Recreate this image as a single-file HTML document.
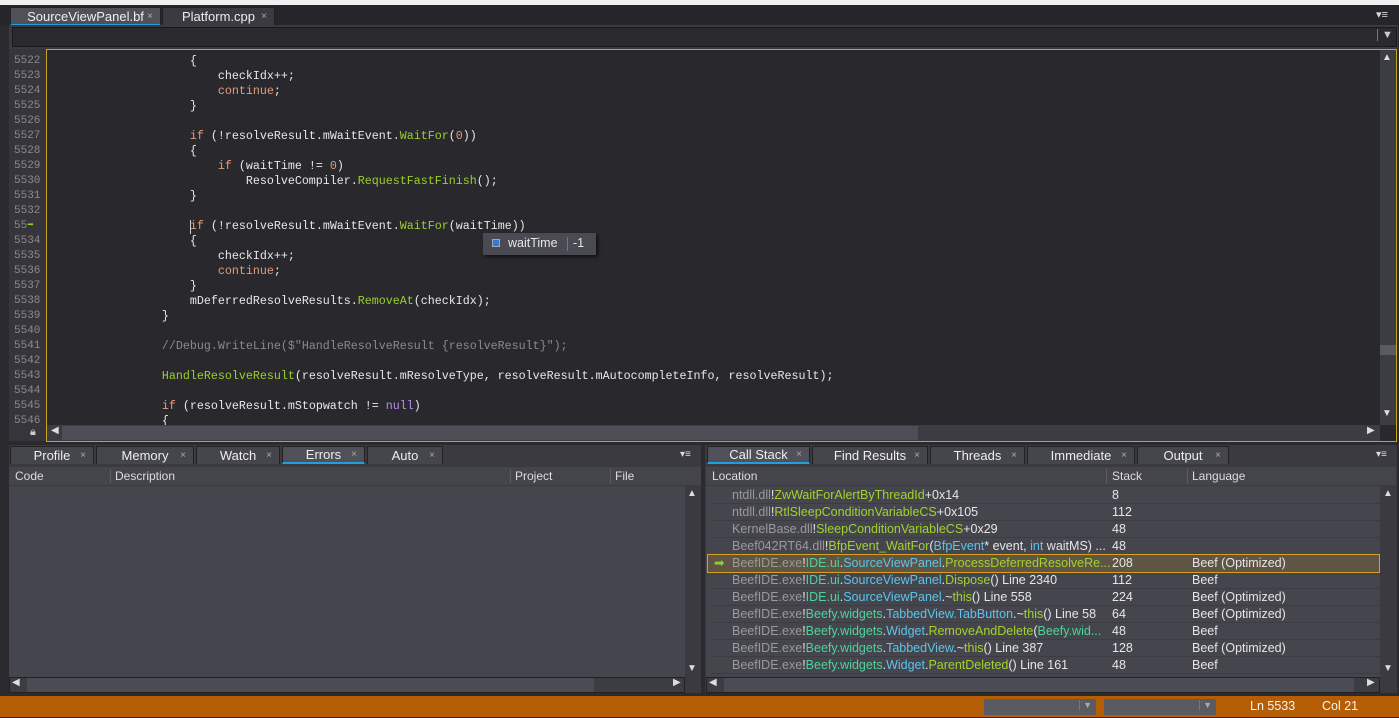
<!DOCTYPE html>
<html><head><meta charset="utf-8">
<style>
*{box-sizing:border-box;margin:0;padding:0}
body{width:1399px;height:718px;background:#2b2b2f;position:relative;overflow:hidden;font-family:"Liberation Sans","DejaVu Sans",sans-serif;color:#e6e6e6;font-size:12.5px}
.a{position:absolute}
.tab{position:absolute;height:19px;background:#45454c;border:1px solid #222;border-bottom:none;color:#eee;font-size:13px;line-height:18px;text-align:center}
.tab .x{position:absolute;right:7px;top:0;color:#aaa;font-size:10px}
.tab.sel{background:#505058;border-bottom:2px solid #1ea0e0}
.code{position:absolute;left:50px;font-family:"Liberation Mono",monospace;font-size:11.67px;white-space:pre;color:#e8e8e8}
.ln{position:absolute;left:14px;font-family:"Liberation Mono",monospace;font-size:11px;color:#8c8c8c}
.k{color:#e59b7b}.m{color:#9ad02c}.n{color:#e59b7b}.c{color:#8a8a8a}.nl{color:#b88ce8}
.row{position:absolute;left:712px;height:17px;line-height:17px;width:668px;font-size:12.5px;white-space:nowrap;border-bottom:1px solid #3c3c42}
.g{color:#9a9a9a}.ns{color:#4fd39c}.ty{color:#5cc4ea}.fn{color:#a2d22e}
.hdr{position:absolute;height:18px;background:#44444b;font-size:12px;line-height:18px;color:#ddd}
.sep{position:absolute;top:2px;width:1px;height:14px;background:#5c5c64}
</style></head><body>
<div class="a" style="left:0;top:0;width:1399px;height:5px;background:#f0f0f0"></div>
<div class="a" style="left:0;top:5px;width:1399px;height:21px;background:#26262a"></div>
<div class="tab sel" style="left:10px;top:7px;width:151px">SourceViewPanel.bf<span class="x">×</span></div>
<div class="tab" style="left:162px;top:7px;width:113px;background:#3a3a40">Platform.cpp<span class="x">×</span></div>
<div class="a" style="left:1376px;top:8px;color:#ddd;font-size:11px">▾≡</div>
<div class="a" style="left:9px;top:25px;width:1389px;height:24px;background:#3a3a40"></div>
<div class="a" style="left:12px;top:27px;width:1385px;height:20px;background:#2a2a2e;border:1px solid #19191c"></div>
<div class="a" style="left:1377px;top:29px;color:#ccc;font-size:11px;border-left:1px solid #777;padding-left:4px">▼</div>
<!-- editor -->
<div class="a" style="left:9px;top:49px;width:38px;height:392px;background:#35353b"></div>
<div class="a" style="left:46px;top:49px;width:1351px;height:393px;background:#29292d;border:1px solid #c8a218"></div>
<div class="a" style="left:1380px;top:50px;width:16px;height:375px;background:#3c3c43"></div>
<div class="a" style="left:1382px;top:52px;color:#ddd;font-size:10px">▲</div>
<div class="a" style="left:1382px;top:408px;color:#ddd;font-size:10px">▼</div>
<div class="a" style="left:1380px;top:345px;width:16px;height:10px;background:#5a5a62"></div>
<div class="a" style="left:47px;top:425px;width:1333px;height:16px;background:#3c3c43"></div>
<div class="a" style="left:62px;top:426px;width:856px;height:14px;background:#4e4e56"></div>
<div class="a" style="left:51px;top:425px;color:#ddd;font-size:10px">◀</div>
<div class="a" style="left:1367px;top:425px;color:#ddd;font-size:10px">▶</div>
<div class="a" style="left:30px;top:426px;color:#ccc;font-size:11px">🔒︎</div>
<div class="ln" style="top:54px;line-height:15px">5522<br>5523<br>5524<br>5525<br>5526<br>5527<br>5528<br>5529<br>5530<br>5531<br>5532<br>55<span style="color:#8fd030">➡</span><br>5534<br>5535<br>5536<br>5537<br>5538<br>5539<br>5540<br>5541<br>5542<br>5543<br>5544<br>5545<br>5546</div>
<div class="code" style="top:54px;line-height:15px;height:371px;overflow:hidden">                    {
                        checkIdx++;
                        <span class="k">continue</span>;
                    }

                    <span class="k">if</span> (!resolveResult.mWaitEvent.<span class="m">WaitFor</span>(<span class="n">0</span>))
                    {
                        <span class="k">if</span> (waitTime != <span class="n">0</span>)
                            ResolveCompiler.<span class="m">RequestFastFinish</span>();
                    }

                    <span class="k">if</span> (!resolveResult.mWaitEvent.<span class="m">WaitFor</span>(waitTime))
                    {
                        checkIdx++;
                        <span class="k">continue</span>;
                    }
                    mDeferredResolveResults.<span class="m">RemoveAt</span>(checkIdx);
                }

                <span class="c">//Debug.WriteLine($"HandleResolveResult {resolveResult}");</span>

                <span class="m">HandleResolveResult</span>(resolveResult.mResolveType, resolveResult.mAutocompleteInfo, resolveResult);

                <span class="k">if</span> (resolveResult.mStopwatch != <span class="nl">null</span>)
                {</div>
<div class="a" style="left:190px;top:220px;width:1px;height:14px;background:#ccc"></div>
<div class="a" style="left:483px;top:233px;width:113px;height:22px;background:#4a4a52;box-shadow:2px 2px 3px #111;font-size:12.5px;line-height:21px">
<span class="a" style="left:9px;top:6px;width:8px;height:8px;background:#3a78d0;border:1px solid #9ab"></span>
<span class="a" style="left:25px;top:0">waitTime</span><span class="a" style="left:84px;top:4px;width:1px;height:14px;background:#777"></span><span class="a" style="left:90px;top:0">-1</span></div>
<!-- left bottom panel -->
<div class="a" style="left:9px;top:445px;width:692px;height:248px;background:#3a3a40"></div>
<div class="tab" style="left:10px;top:446px;width:84px;height:18px;line-height:17px">Profile<span class="x">×</span></div>
<div class="tab" style="left:96px;top:446px;width:98px;height:18px;line-height:17px">Memory<span class="x">×</span></div>
<div class="tab" style="left:196px;top:446px;width:84px;height:18px;line-height:17px">Watch<span class="x">×</span></div>
<div class="tab sel" style="left:282px;top:446px;width:83px;height:18px;line-height:16px">Errors<span class="x">×</span></div>
<div class="tab" style="left:367px;top:446px;width:76px;height:18px;line-height:17px">Auto<span class="x">×</span></div>
<div class="a" style="left:680px;top:449px;color:#ddd;font-size:10px">▾≡</div>
<div class="hdr" style="left:9px;top:467px;width:692px"><span class="a" style="left:6px">Code</span><span class="sep" style="left:101px"></span><span class="a" style="left:106px">Description</span><span class="sep" style="left:501px"></span><span class="a" style="left:506px">Project</span><span class="sep" style="left:601px"></span><span class="a" style="left:606px">File</span></div>
<div class="a" style="left:9px;top:486px;width:676px;height:191px;background:#45454d"></div>
<div class="a" style="left:685px;top:486px;width:16px;height:191px;background:#3a3a40"></div>
<div class="a" style="left:687px;top:488px;color:#ddd;font-size:10px">▲</div>
<div class="a" style="left:687px;top:663px;color:#ddd;font-size:10px">▼</div>
<div class="a" style="left:9px;top:677px;width:676px;height:16px;background:#3c3c43;border:1px solid #222"></div>
<div class="a" style="left:27px;top:678px;width:567px;height:14px;background:#4b4b53"></div>
<div class="a" style="left:12px;top:677px;color:#ddd;font-size:10px">◀</div>
<div class="a" style="left:673px;top:677px;color:#ddd;font-size:10px">▶</div>
<!-- right bottom panel -->
<div class="a" style="left:705px;top:445px;width:692px;height:248px;background:#3a3a40"></div>
<div class="tab sel" style="left:707px;top:446px;width:103px;height:18px;line-height:16px">Call Stack<span class="x">×</span></div>
<div class="tab" style="left:812px;top:446px;width:116px;height:18px;line-height:17px">Find Results<span class="x">×</span></div>
<div class="tab" style="left:930px;top:446px;width:95px;height:18px;line-height:17px">Threads<span class="x">×</span></div>
<div class="tab" style="left:1027px;top:446px;width:108px;height:18px;line-height:17px">Immediate<span class="x">×</span></div>
<div class="tab" style="left:1137px;top:446px;width:92px;height:18px;line-height:17px">Output<span class="x">×</span></div>
<div class="a" style="left:1376px;top:449px;color:#ddd;font-size:10px">▾≡</div>
<div class="hdr" style="left:706px;top:467px;width:690px"><span class="a" style="left:6px">Location</span><span class="sep" style="left:400px"></span><span class="a" style="left:406px">Stack</span><span class="sep" style="left:481px"></span><span class="a" style="left:486px">Language</span></div>
<div class="a" style="left:706px;top:486px;width:674px;height:191px;background:#45454d"></div>
<div class="a" style="left:1380px;top:486px;width:16px;height:191px;background:#3a3a40"></div>
<div class="a" style="left:1383px;top:488px;color:#ddd;font-size:10px">▲</div>
<div class="a" style="left:1383px;top:663px;color:#ddd;font-size:10px">▼</div>
<div class="row" style="top:487px"><span class="a" style="left:20px"><span class="g">ntdll.dll</span>!<span class="fn">ZwWaitForAlertByThreadId</span>+0x14</span><span class="a" style="left:400px">8</span></div>
<div class="row" style="top:504px"><span class="a" style="left:20px"><span class="g">ntdll.dll</span>!<span class="fn">RtlSleepConditionVariableCS</span>+0x105</span><span class="a" style="left:400px">112</span></div>
<div class="row" style="top:521px"><span class="a" style="left:20px"><span class="g">KernelBase.dll</span>!<span class="fn">SleepConditionVariableCS</span>+0x29</span><span class="a" style="left:400px">48</span></div>
<div class="row" style="top:538px"><span class="a" style="left:20px"><span class="g">Beef042RT64.dll</span>!<span class="fn">BfpEvent_WaitFor</span>(<span class="ty">BfpEvent</span>* event, <span class="ty">int</span> waitMS) ...</span><span class="a" style="left:400px">48</span></div>
<div class="row" style="top:554px;left:707px;width:673px;background:#5e5544;border:1px solid #d8a020;height:19px"><span class="a" style="left:6px;top:0;color:#8fd030">➡</span><span class="a" style="left:24px"><span class="g">BeefIDE.exe</span>!<span class="ns">IDE.ui</span>.<span class="ty">SourceViewPanel</span>.<span class="fn">ProcessDeferredResolveRe...</span></span><span class="a" style="left:404px">208</span><span class="a" style="left:484px">Beef (Optimized)</span></div>
<div class="row" style="top:572px"><span class="a" style="left:20px"><span class="g">BeefIDE.exe</span>!<span class="ns">IDE.ui</span>.<span class="ty">SourceViewPanel</span>.<span class="fn">Dispose</span>() Line 2340</span><span class="a" style="left:400px">112</span><span class="a" style="left:480px">Beef</span></div>
<div class="row" style="top:589px"><span class="a" style="left:20px"><span class="g">BeefIDE.exe</span>!<span class="ns">IDE.ui</span>.<span class="ty">SourceViewPanel</span>.~<span class="fn">this</span>() Line 558</span><span class="a" style="left:400px">224</span><span class="a" style="left:480px">Beef (Optimized)</span></div>
<div class="row" style="top:606px"><span class="a" style="left:20px"><span class="g">BeefIDE.exe</span>!<span class="ns">Beefy.widgets</span>.<span class="ty">TabbedView.TabButton</span>.~<span class="fn">this</span>() Line 58</span><span class="a" style="left:400px">64</span><span class="a" style="left:480px">Beef (Optimized)</span></div>
<div class="row" style="top:623px"><span class="a" style="left:20px"><span class="g">BeefIDE.exe</span>!<span class="ns">Beefy.widgets</span>.<span class="ty">Widget</span>.<span class="fn">RemoveAndDelete</span>(<span class="ns">Beefy.wid...</span></span><span class="a" style="left:400px">48</span><span class="a" style="left:480px">Beef</span></div>
<div class="row" style="top:640px"><span class="a" style="left:20px"><span class="g">BeefIDE.exe</span>!<span class="ns">Beefy.widgets</span>.<span class="ty">TabbedView</span>.~<span class="fn">this</span>() Line 387</span><span class="a" style="left:400px">128</span><span class="a" style="left:480px">Beef (Optimized)</span></div>
<div class="row" style="top:657px"><span class="a" style="left:20px"><span class="g">BeefIDE.exe</span>!<span class="ns">Beefy.widgets</span>.<span class="ty">Widget</span>.<span class="fn">ParentDeleted</span>() Line 161</span><span class="a" style="left:400px">48</span><span class="a" style="left:480px">Beef</span></div>
<div class="a" style="left:706px;top:677px;width:674px;height:16px;background:#3c3c43;border:1px solid #222"></div>
<div class="a" style="left:724px;top:678px;width:630px;height:14px;background:#4b4b53"></div>
<div class="a" style="left:709px;top:677px;color:#ddd;font-size:10px">◀</div>
<div class="a" style="left:1367px;top:677px;color:#ddd;font-size:10px">▶</div>
<!-- status -->
<div class="a" style="left:0;top:696px;width:1399px;height:21px;background:#b55e06"></div>
<div class="a" style="left:984px;top:699px;width:112px;height:16px;background:#5a5a62"><span class="a" style="right:4px;top:1px;color:#aaa;font-size:9px;border-left:1px solid #777;padding-left:3px">▼</span></div>
<div class="a" style="left:1104px;top:699px;width:112px;height:16px;background:#5a5a62"><span class="a" style="right:4px;top:1px;color:#aaa;font-size:9px;border-left:1px solid #777;padding-left:3px">▼</span></div>
<div class="a" style="left:1250px;top:699px;font-size:12.5px;color:#f4f4f4">Ln 5533</div>
<div class="a" style="left:1322px;top:699px;font-size:12.5px;color:#f4f4f4">Col 21</div>
</body></html>
